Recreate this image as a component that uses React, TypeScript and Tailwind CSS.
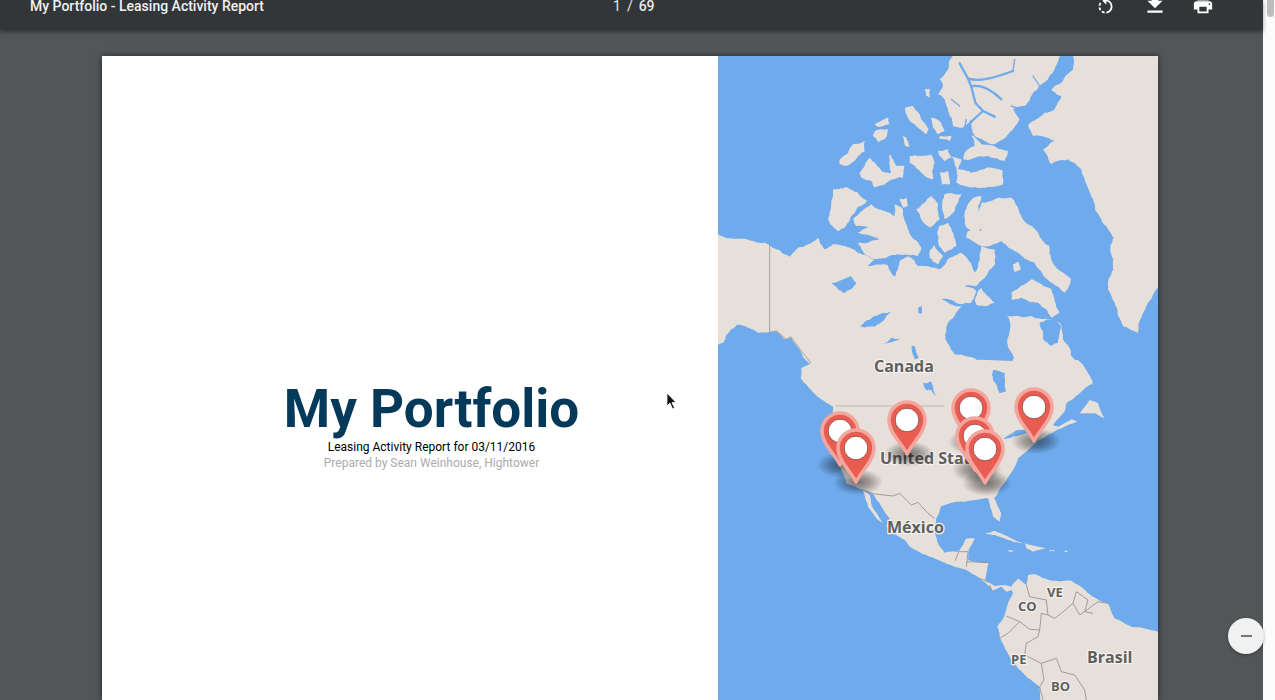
const north: string[] = [
  "0,535 30,547 70,548 120,560 155,567 185,582 215,602 225,590 240,575 270,565 300,545 320,580 345,565 380,570 420,590 470,612 450,630 510,628 530,662 545,615 570,600 600,630 650,635 665,640 690,610 730,590 750,612 770,650 785,610 790,570 830,580 832,620 800,665 775,690 740,690 775,705 760,740 730,745 670,730 730,752 872,780 940,780 1000,790 1025,800 1035,850 1060,900 1100,950 1125,985 300,985 280,960 280,930 250,890 220,845 200,850 175,825 155,828 120,830 90,815 60,805 40,820 15,860 -20,880 -20,535",
  "1060,-30 1065,40 1030,80 1000,100 1030,120 1010,160 955,190 930,210 945,240 1005,255 975,280 1000,325 1050,310 1090,340 1125,430 1150,490 1185,545 1185,640 1170,700 1190,740 1215,810 1260,830 1290,740 1320,695 1380,660 1380,-30",
  "730,-30 695,12 690,40 665,70 675,90 660,115 680,130 690,160 700,185 705,210 735,215 760,190 770,240 800,255 830,265 855,250 880,225 905,190 885,160 920,150 945,110 965,90 990,70 1010,40 1045,-30",
  "560,155 585,150 610,190 632,220 625,235 595,210 570,185",
  "640,185 665,195 680,225 660,235 645,215",
  "665,240 700,240 695,255 665,250",
  "470,205 510,185 515,205 480,212",
  "470,225 510,220 500,250 480,260 465,240",
  "620,100 635,98 635,125 625,120",
  "553,240 565,245 575,272 562,270",
  "405,265 440,255 440,285 410,315 385,330 365,325 365,310",
  "425,350 455,305 490,345 520,350 515,295 535,330 560,330 555,365 500,385 470,395 460,375 430,365",
  "575,300 610,300 640,295 650,320 645,370 620,360 600,340 575,320",
  "665,350 690,345 695,385 670,385",
  "660,285 690,280 700,305 680,315 665,300",
  "700,300 730,310 720,340 760,350 820,335 855,345 855,385 800,395 740,390 715,380 715,335",
  "740,290 770,270 760,235 790,265 870,285 860,315 810,300 760,310 735,310",
  "345,400 385,393 420,410 447,435 400,480 380,515 360,525 330,490",
  "405,490 460,445 500,465 530,480 530,445 555,460 570,520 610,575 600,600 540,595 470,610 430,580 420,560 485,550 460,540 420,530 450,515 415,510",
  "545,430 565,425 570,450 555,455",
  "595,460 640,420 660,445 665,490 635,515 610,490",
  "680,415 730,415 710,465 680,490 672,450",
  "665,510 690,500 715,570 680,590 660,560",
  "635,585 650,568 675,600 660,625 635,605",
  "740,470 765,425 790,420 780,450 790,515 770,530 745,515",
  "790,440 840,425 880,425 910,480 960,530 995,570 1000,610 1060,670 1040,710 1000,680 950,620 900,590 850,555 790,570 745,545 750,525 790,525 780,470",
  "880,710 940,670 1000,700 1025,770 1000,785 960,740 910,725 880,730",
  "770,730 790,695 830,740 780,755",
  "885,625 900,617 908,640 890,648",
  "805,770 825,765 825,780 808,782",
];

const northWater: string[] = [
  "730,752 690,800 682,850 710,895 790,920 830,935 850,965 862,945 888,905 870,870 872,785 860,770 800,750",
  "965,800 1010,790 1030,810 1020,860 1000,870 975,850",
  "340,680 400,660 415,680 380,712 360,700",
  "425,810 470,780 518,768 470,812 440,815",
  "495,865 520,845 545,850 515,860",
  "600,755 612,750 612,772 602,772",
  "580,870 590,870 602,905 590,910",
  "1140,545 1165,540 1170,575 1150,585",
];

const south: string[] = [
  "250,-5 248,25 270,50 305,85 345,110 345,130 335,180 340,230 370,300 385,340 430,358 465,372 515,445 505,470 560,510 575,530 610,550 660,570 710,590 745,600 770,615 790,630 815,650 825,662 850,650 865,665 880,660 885,670 870,700 860,735 838,770 845,800 880,870 925,920 965,950 970,1020 1380,1020 1380,800 1320,785 1240,770 1190,745 1170,700 1110,670 1060,632 1000,632 950,612 930,615 925,645 900,625 880,650 860,645 830,648 800,630 812,578 770,575 750,570 752,540 770,505 745,505 722,545 680,548 660,520 650,490 655,445 670,408 700,398 740,395 770,390 810,385 825,440 845,455 850,430 828,385 850,350 885,300 900,265 950,222 1000,190 1030,175 1078,155 1060,148 1020,170 1005,165 1040,125 1045,100 1085,70 1125,35 1105,0 1080,-30 300,-30",
  "1085,130 1115,90 1140,100 1160,145 1130,130",
  "435,360 455,375 465,415 495,460 475,445 450,410",
  "800,490 830,483 880,505 915,520 870,510 830,495",
  "920,520 985,535 945,545 925,535",
  "870,540 890,543 875,546",
  "995,540 1010,541 1010,544 995,544",
  "1040,542 1048,542 1048,546 1040,546",
];

const southWater: string[] = [
  "825,0 860,10 865,65 845,70 825,30",
  "615,40 640,35 662,85 640,60 625,60",
  "855,205 900,180 960,170 925,190 870,205",
];

// Roughens a hand-traced outline so that the coast reads as a coast.
const coast = (points: string, seed: number, strength = 0.2) => {
  let p = points.split(" ").map((s) => s.split(",").map(Number));
  let r = seed * 7919 + 17;
  const rnd = () => {
    r = (r * 16807) % 2147483647;
    return (r % 1000) / 1000 - 0.5;
  };
  for (let depth = 0; depth < 3; depth++) {
    const out: number[][] = [];
    p.forEach((a, i) => {
      const b = p[(i + 1) % p.length];
      const dx = b[0] - a[0];
      const dy = b[1] - a[1];
      const len = Math.hypot(dx, dy);
      out.push(a);
      if (len > 5) {
        const k = (rnd() * Math.min(len * strength, 14)) / (len || 1);
        out.push([(a[0] + b[0]) / 2 - dy * k, (a[1] + b[1]) / 2 + dx * k]);
      }
    });
    p = out;
  }
  return "M" + p.map((c) => `${c[0].toFixed(1)} ${c[1].toFixed(1)}`).join(" L") + " Z";
};

const pins: [number, number][] = [
  [840, 466],
  [856, 483],
  [907, 455],
  [971, 443],
  [975, 471],
  [985, 484],
  [1034, 442],
];

function MapArt() {
  const water = "#6eaaec";
  const land = "#e7e0da";
  return (
    <svg viewBox="718 56 440 644" className="block h-[644px] w-[440px]">
      <defs>
        <radialGradient id="pinShadow">
          <stop offset="0%" stopColor="#000" stopOpacity="0.5" />
          <stop offset="50%" stopColor="#000" stopOpacity="0.3" />
          <stop offset="100%" stopColor="#000" stopOpacity="0" />
        </radialGradient>
      </defs>
      <rect x="718" y="56" width="440" height="644" fill={water} />
      <g transform="translate(718 56) scale(0.33333)">
        {north.map((p, i) => (
          <path key={i} d={coast(p, i + 3)} fill={land} />
        ))}
        {northWater.map((p, i) => (
          <path key={i} d={coast(p, i + 41)} fill={water} />
        ))}
        <g fill="none" stroke={water} strokeLinecap="round" strokeLinejoin="round">
          <path
            strokeWidth="7"
            d="M725 22 L750 68 L760 92 L772 140 L795 165 L762 195 L745 215 M750 68 C785 78 830 65 885 45 M765 90 C800 85 830 110 850 130 M795 165 L830 182"
          />
          <path
            strokeWidth="4"
            d="M1005 255 L965 262 M1125 470 L1150 500 M1145 510 L1185 545 M1150 600 L1185 610 M1160 660 L1185 640 M885 45 L890 10 M945 60 L965 90 M880 150 L910 160 M700 130 L725 150 M740 215 L745 190"
          />
        </g>
        <path
          d="M155 567 L155 828 L175 825 L205 850 L218 842 L250 885 L282 925 L280 950"
          fill="none"
          stroke="#a3a09c"
          strokeWidth="3"
        />
      </g>
      <g transform="translate(718 370) scale(0.33333)">
        {south.map((p, i) => (
          <path key={i} d={coast(p, i + 71, 0.1)} fill={land} />
        ))}
        {southWater.map((p, i) => (
          <path key={i} d={coast(p, i + 97)} fill={water} />
        ))}
        <g fill="none" stroke="#8f8f8f" strokeWidth="2.5" strokeLinejoin="round">
          <path stroke="#b3afab" d="M355 108 L680 108" />
          <path d="M430 358 L470 372 L525 378 L545 370 L580 405 L600 397 L630 430 L650 445" />
          <path d="M712 572 L722 545 L750 545 L745 590 M745 575 L812 578 M785 625 L812 637 M815 645 L820 660" />
          <path d="M925 645 L935 680 L985 690 L990 735 L1010 745 L1030 730 L1065 700 L1075 665 L1110 690 L1100 725 L1140 695 L1170 700 M1100 725 L1125 730 M1065 700 L1085 735 L1100 725" />
          <path d="M865 738 L905 755 L935 778 L965 780 L970 730 L990 735 M905 755 L870 790 L845 805 M965 780 L960 800 L925 820 L920 855 L970 880 L1015 865 L1030 905 L1070 915 L1100 960 L1105 990" />
          <path d="M970 880 L978 930 L965 950 L975 990" />
        </g>
      </g>
      <g
        fontFamily="'Open Sans', sans-serif"
        fontWeight="700"
        fill="#5f5f5f"
        stroke="#f4f1ee"
        strokeWidth="2.5"
        paintOrder="stroke"
        strokeLinejoin="round"
      >
        <text x="874" y="372" fontSize="16">Canada</text>
        <text x="880" y="464" fontSize="16">United States</text>
        <text x="887" y="533" fontSize="16">México</text>
        <text x="1087" y="663" fontSize="16">Brasil</text>
        <text x="1047" y="597" fontSize="13">VE</text>
        <text x="1018" y="611" fontSize="13">CO</text>
        <text x="1011" y="664" fontSize="13">PE</text>
        <text x="1051" y="691" fontSize="13">BO</text>
      </g>
      {pins.map(([x, y], i) => (
        <ellipse key={i} cx={x + 2} cy={y - 1} rx="25" ry="13" fill="url(#pinShadow)" />
      ))}
      {pins.map(([x, y], i) => (
        <g key={i} transform={`translate(${x} ${y})`}>
          <path
            d="M0 -1 C-5 -12 -18 -22 -18 -35 A18 18 0 1 1 18 -35 C18 -22 5 -12 0 -1 Z"
            fill="#e85c52"
            stroke="#f3a69e"
            strokeWidth="3.5"
            strokeLinejoin="round"
          />
          <circle cx="0" cy="-35" r="11.8" fill="#ffffff" stroke="#8a3f38" strokeWidth="0.8" />
        </g>
      ))}
    </svg>
  );
}

function ToolIcon({ d, className }: { d: string; className: string }) {
  return (
    <svg viewBox="0 0 24 24" className={className} fill="#ffffff">
      <path d={d} />
    </svg>
  );
}

export default function App() {
  return (
    <div className="relative flex h-[700px] w-full overflow-hidden bg-[#fbfbfb]">
      <div className="flex min-w-0 flex-1 flex-col bg-[#525659]">
        <header
          className="relative z-10 flex h-[30px] shrink-0 items-center bg-[#323639] pb-[18px] pl-[30px] text-white shadow-[0_2px_4px_rgba(0,0,0,0.4)]"
          style={{ fontFamily: "Roboto, sans-serif" }}
        >
          <div className="w-[583px] shrink-0 text-[14px] font-medium whitespace-nowrap text-[#f1f1f1]">
            My Portfolio - Leasing Activity Report
          </div>
          <div className="w-[482px] shrink-0 text-[14px] font-medium whitespace-nowrap text-[#e8e8e8]">
            <span className="font-normal">1</span>
            <span className="mx-[6px] font-normal">/</span>
            <span>69</span>
          </div>
          <ToolIcon
            className="h-[21px] w-[21px] shrink-0"
            d="M7.11 8.53L5.7 7.11C4.8 8.27 4.24 9.61 4.07 11h2.02c.14-.87.49-1.72 1.02-2.47zM6.09 13H4.07c.17 1.39.72 2.73 1.62 3.89l1.41-1.42c-.52-.75-.87-1.59-1.01-2.47zm1.01 5.32c1.16.9 2.51 1.44 3.9 1.61V17.9c-.87-.15-1.71-.49-2.46-1.03L7.1 18.32zM13 4.07V1L8.45 5.55 13 10V6.09c2.84.48 5 2.94 5 5.91s-2.16 5.43-5 5.91v2.02c3.95-.49 7-3.85 7-7.93s-3.05-7.44-7-7.93z"
          />
          <ToolIcon
            className="mb-[4px] ml-[26px] h-[26px] w-[26px] shrink-0"
            d="M19 9h-4V3H9v6H5l7 7 7-7zM5 18v2h14v-2H5z"
          />
          <ToolIcon
            className="mb-[2px] ml-[24px] h-[22px] w-[22px] shrink-0"
            d="M19 8H5c-1.66 0-3 1.34-3 3v6h4v4h12v-4h4v-6c0-1.66-1.34-3-3-3zm-3 11H8v-5h8v5zm3-7c-.55 0-1-.45-1-1s.45-1 1-1 1 .45 1 1-.45 1-1 1zm-1-9H6v4h12V3z"
          />
        </header>
        <main className="pt-[26px] pl-[102px]">
          <div className="flex w-[1056px] bg-white shadow-[0_0_6px_rgba(0,0,0,0.55)]">
            <div
              className="flex w-[616px] flex-col items-center pt-[321px] pl-[43px]"
              style={{ fontFamily: "Roboto, sans-serif" }}
            >
              <h1 className="text-[53px] leading-[64px] font-bold whitespace-nowrap text-[#05395a]">
                My Portfolio
              </h1>
              <p className="mt-[-2px] text-[12px] leading-[16px] whitespace-nowrap text-black">
                Leasing Activity Report for 03/11/2016
              </p>
              <p className="text-[12px] leading-[16px] whitespace-nowrap text-[#ababab]">
                Prepared by Sean Weinhouse, Hightower
              </p>
            </div>
            <MapArt />
          </div>
        </main>
      </div>
      <aside className="relative w-[12px] shrink-0 bg-[#fbfbfb]">
        <div className="ml-[4px] h-[17px] w-[7px] rounded-b-[4px] bg-[#bdbdbd]" />
      </aside>
      <svg viewBox="0 0 12 19" className="absolute top-[392px] left-[666px] h-[19px] w-[12px]">
        <path d="M1 1 L1 14 L4 11 L6.5 17 L8.5 16 L6 10.5 L10 10.5 Z" fill="#111111" stroke="#ffffff" strokeWidth="0.8" />
      </svg>
      <button className="absolute top-[618px] left-[1228px] flex h-[36px] w-[36px] items-center justify-center rounded-full bg-[#f1f1f1] shadow-[0_1px_3px_rgba(0,0,0,0.35)]">
        <span className="block h-[2px] w-[11px] bg-[#7a7478]" />
      </button>
    </div>
  );
}
